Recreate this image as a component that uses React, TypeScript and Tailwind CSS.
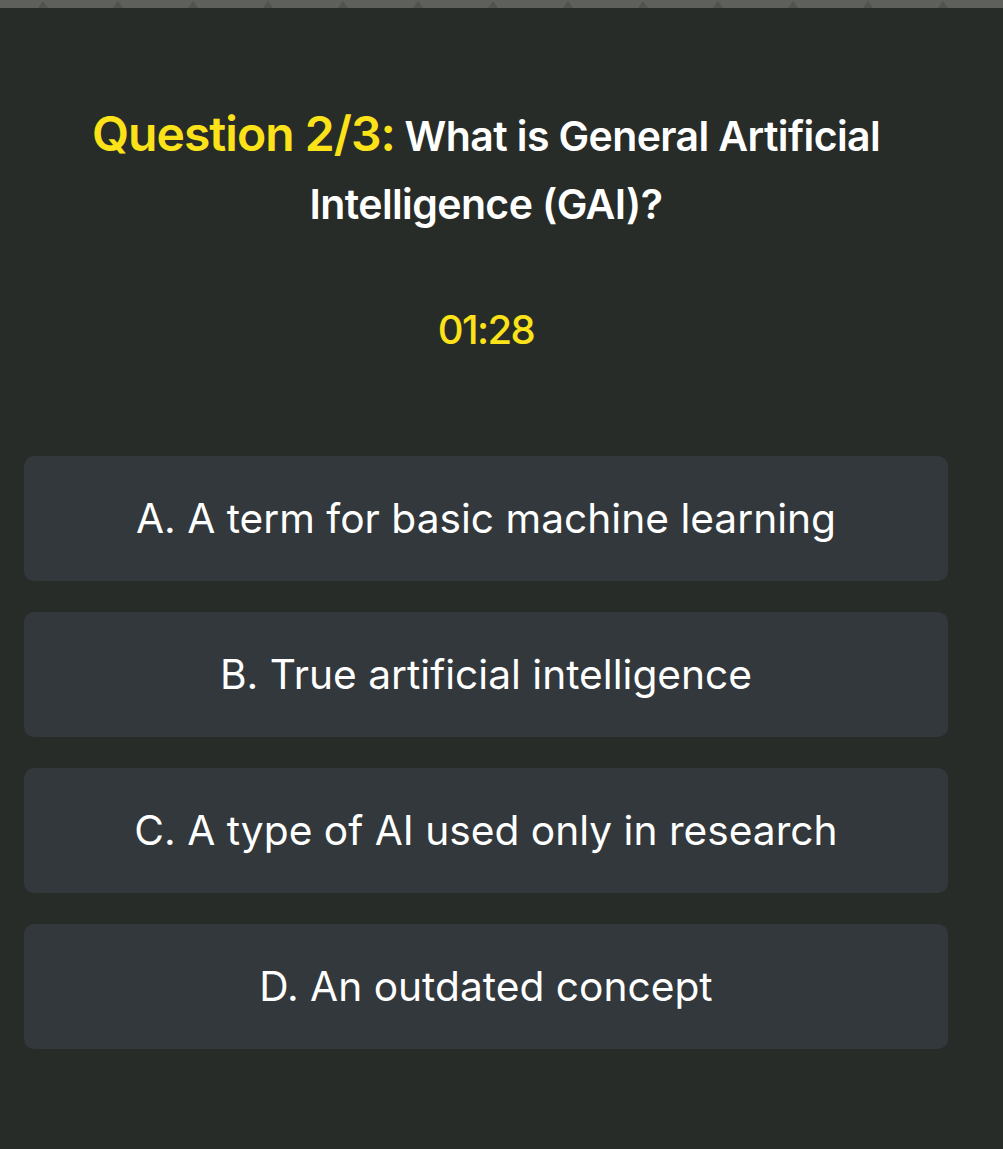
const options = [
  "A. A term for basic machine learning",
  "B. True artificial intelligence",
  "C. A type of AI used only in research",
  "D. An outdated concept",
];

function TopStrip() {
  return (
    <div className="h-2 w-full bg-[#5d605b] flex items-end pl-[38px] gap-[65px] overflow-hidden">
      {Array.from({ length: 13 }).map((_, i) => (
        <svg key={i} width="10" height="7" viewBox="0 0 10 7" className="shrink-0 opacity-60">
          <path d="M5 0 L10 7 L0 7 Z" fill="#484c47" />
        </svg>
      ))}
    </div>
  );
}

export default function App() {
  return (
    <div
      className="min-h-[1149px] bg-[#282c29] text-white"
      style={{ fontFamily: "Inter, 'Noto Sans', sans-serif" }}
    >
      <TopStrip />
      <div className="ml-6 w-[924px] pt-[94px]">
        <h2 className="text-center font-semibold text-[41px] leading-[68px] tracking-[-0.015em]">
          <span className="text-[#fbe219] text-[48px] leading-none tracking-[-0.02em]">Question 2/3:</span>{" "}
          What is General Artificial Intelligence (GAI)?
        </h2>
        <div className="mt-[68px] text-center text-[40px] font-medium text-[#fbe219] tracking-[-0.04em] leading-[48px]">
          01:28
        </div>
        <div className="mt-[102px] flex flex-col gap-[31px]">
          {options.map((o) => (
            <button
              key={o}
              className="h-[125px] w-full rounded-[10px] bg-[#32383b] text-center text-[40.7px] font-normal text-white"
            >
              {o}
            </button>
          ))}
        </div>
      </div>
    </div>
  );
}
